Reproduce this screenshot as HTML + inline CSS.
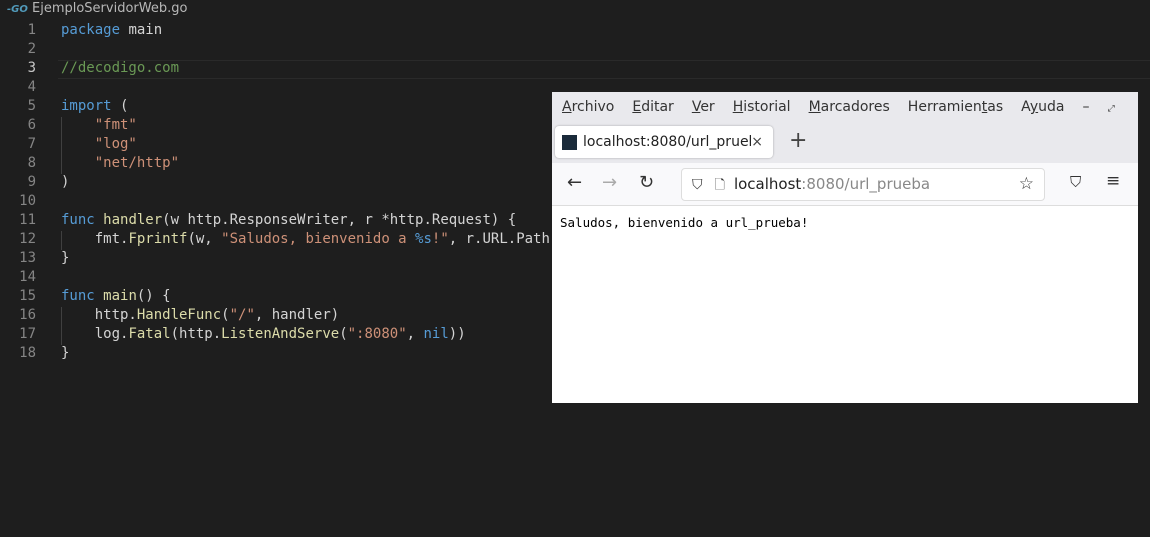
<!DOCTYPE html>
<html><head><meta charset="utf-8"><style>
body{margin:0;width:1150px;height:537px;background:#1e1e1e;overflow:hidden;position:relative;font-family:"DejaVu Sans Mono","Liberation Mono",monospace}
.tab{position:absolute;left:7px;top:0;font:13px "DejaVu Sans","Liberation Sans",sans-serif;color:#b8b8b8;height:18px;line-height:17px}
.go{color:#519aba;font-weight:bold;font-size:10px;font-style:italic}
.ln{position:absolute;left:0;width:36px;text-align:right;color:#858585;font-size:14px}
.cd{position:absolute;left:61px;color:#d4d4d4;font-size:14px;white-space:pre}
.k{color:#569cd6}.f{color:#dcdcaa}.s{color:#ce9178}.c{color:#6a9955}
.cur{position:absolute;left:58px;right:0;top:57px;height:17px;border-top:1px solid #2a2a2a;border-bottom:1px solid #2a2a2a}
.guide{position:absolute;left:61px;width:1px;background:#404040}
.code{position:absolute;left:0;top:3px;width:1150px;height:400px}
.win{position:absolute;left:552px;top:92px;width:586px;height:311px;background:#fff;font-family:"DejaVu Sans","Liberation Sans",sans-serif}
.menu{height:30px;background:#e9e9ed;color:#333;font-size:14px;line-height:30px;white-space:nowrap;overflow:hidden}
.menu span{margin-left:10px;margin-right:8px}
.tabs{height:41px;background:#e9e9ed;position:relative}
.ftab{position:absolute;left:3px;top:4px;width:218px;height:32px;background:#fff;border-radius:4px;box-shadow:0 0 2px rgba(0,0,0,.3);font-size:14px;line-height:32px;color:#222}
.ttl{position:absolute;left:28px;top:0;width:168px;overflow:hidden;white-space:nowrap}
.nav{height:42px;background:#f9f9fb;border-bottom:1px solid #ddd;position:relative;color:#333}
.url{position:absolute;left:129px;top:5px;width:362px;height:31px;border:1px solid #ddd;border-radius:4px;background:#fff;font-size:15px;line-height:31px}
</style></head><body>
<div class="tab"><span class="go">-GO</span> EjemploServidorWeb.go</div>
<div class="code">
<div class="cur"></div>
<div class="guide" style="top:114px;height:57px"></div>
<div class="guide" style="top:228px;height:19px"></div>
<div class="guide" style="top:304px;height:38px"></div>
<div class="ln" style="top:19px">1</div><div class="cd" style="top:19px"><span class="k">package</span> main</div>
<div class="ln" style="top:38px">2</div>
<div class="ln" style="top:57px;color:#c6c6c6">3</div><div class="cd c" style="top:57px">//decodigo.com</div>
<div class="ln" style="top:76px">4</div>
<div class="ln" style="top:95px">5</div><div class="cd" style="top:95px"><span class="k">import</span> (</div>
<div class="ln" style="top:114px">6</div><div class="cd s" style="top:114px">    "fmt"</div>
<div class="ln" style="top:133px">7</div><div class="cd s" style="top:133px">    "log"</div>
<div class="ln" style="top:152px">8</div><div class="cd s" style="top:152px">    "net/http"</div>
<div class="ln" style="top:171px">9</div><div class="cd" style="top:171px">)</div>
<div class="ln" style="top:190px">10</div>
<div class="ln" style="top:209px">11</div><div class="cd" style="top:209px"><span class="k">func</span> <span class="f">handler</span>(w http.ResponseWriter, r *http.Request) {</div>
<div class="ln" style="top:228px">12</div><div class="cd" style="top:228px">    fmt.<span class="f">Fprintf</span>(w, <span class="s">"Saludos, bienvenido a </span><span class="k">%s</span><span class="s">!"</span>, r.URL.Path)</div>
<div class="ln" style="top:247px">13</div><div class="cd" style="top:247px">}</div>
<div class="ln" style="top:266px">14</div>
<div class="ln" style="top:285px">15</div><div class="cd" style="top:285px"><span class="k">func</span> <span class="f">main</span>() {</div>
<div class="ln" style="top:304px">16</div><div class="cd" style="top:304px">    http.<span class="f">HandleFunc</span>(<span class="s">"/"</span>, handler)</div>
<div class="ln" style="top:323px">17</div><div class="cd" style="top:323px">    log.<span class="f">Fatal</span>(http.<span class="f">ListenAndServe</span>(<span class="s">":8080"</span>, <span class="k">nil</span>))</div>
<div class="ln" style="top:342px">18</div><div class="cd" style="top:342px">}</div>
</div>

<div class="win">
<div class="menu"><span><u>A</u>rchivo</span><span><u>E</u>ditar</span><span><u>V</u>er</span><span><u>H</u>istorial</span><span><u>M</u>arcadores</span><span>Herramien<u>t</u>as</span><span>A<u>y</u>uda</span><span>–</span><span style="font-size:9px">⤢</span></div>
<div class="tabs">
<div class="ftab"><span style="position:absolute;left:7px;top:9px;width:15px;height:15px;background:#1a2a3a"></span><span class="ttl">localhost:8080/url_prueb<span style="color:#999">a</span></span><span style="position:absolute;right:10px;color:#444">×</span></div>
<div style="position:absolute;left:237px;top:6px;font-size:22px;color:#444">+</div>
</div>
<div class="nav">
<span style="position:absolute;left:15px;top:9px;font-size:18px">←</span>
<span style="position:absolute;left:50px;top:9px;font-size:18px;color:#aaa">→</span>
<span style="position:absolute;left:87px;top:9px;font-size:18px">↻</span>
<div class="url"><span style="margin-left:10px;font-size:14px">⛉</span><span style="margin-left:12px;font-size:13px">🗋</span><span style="margin-left:9px;color:#222">localhost</span><span style="color:#888">:8080/url_prueba</span><span style="position:absolute;right:10px;font-size:17px">☆</span></div>
<span style="position:absolute;left:518px;top:10px;font-size:15px">⛉</span>
<span style="position:absolute;left:554px;top:8px;font-size:17px">≡</span>
</div>
<div style="font-family:'DejaVu Sans Mono',monospace;font-size:12.5px;color:#000;padding:9px 8px">Saludos, bienvenido a url_prueba!</div>
</div>
</body></html>
